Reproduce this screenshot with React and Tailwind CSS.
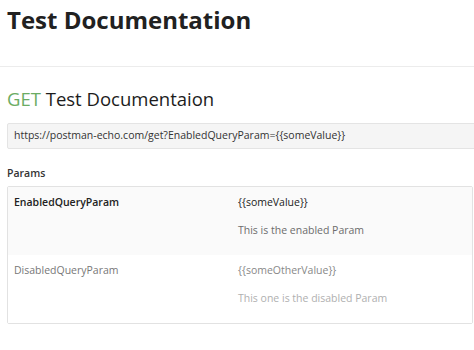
import React from "react";

const params = [
  {
    name: "EnabledQueryParam",
    value: "{{someValue}}",
    desc: "This is the enabled Param",
    enabled: true,
  },
  {
    name: "DisabledQueryParam",
    value: "{{someOtherValue}}",
    desc: "This one is the disabled Param",
    enabled: false,
  },
];

export default function App() {
  return (
    <div
      className="w-[474px] h-[350px] overflow-hidden bg-white text-[#282828]"
      style={{ fontFamily: '"Open Sans", "Noto Sans", sans-serif' }}
    >
      <div className="w-[520px]">
        {/* Page title */}
        <h1 className="pl-[7px] pt-[1px] h-[66px] text-[24px] leading-[38px] font-bold text-[#212121]">
          Test Documentation
        </h1>
        <div className="border-t border-[#ececec]" />

        <div className="pl-[7px]">
          <h2 className="mt-[18px] text-[18.5px] leading-[28px] text-[#1c1c1c]">
            <span className="text-[#6bac63]">GET</span> Test Documentaion
          </h2>

          {/* URL */}
          <div className="mt-[10px] h-[26px] flex items-center px-[6px] bg-[#f5f5f5] border border-[#e4e4e4] rounded-[2px] text-[10.5px] text-[#333]">
            https://postman-echo.com/get?EnabledQueryParam=&#123;&#123;someValue&#125;&#125;
          </div>

          <div className="mt-[16px] text-[10.5px] font-semibold text-[#333] leading-[16px]">
            Params
          </div>

          {/* Params table */}
          <div className="mt-[5px] border border-[#e2e2e2] rounded-[2px] w-[466px]">
            {params.map((p) => (
              <div
                key={p.name}
                className={`flex h-[68px] pt-[7px] ${
                  p.enabled ? "bg-[#fafafa]" : "bg-white"
                }`}
              >
                <div
                  className={`w-[230px] pl-[6px] text-[10.5px] leading-[16px] ${
                    p.enabled
                      ? "font-semibold text-[#222]"
                      : "text-[#777]"
                  }`}
                >
                  {p.name}
                </div>
                <div className="flex flex-col gap-[12px] text-[10.5px] leading-[16px]">
                  <div className={p.enabled ? "text-[#222]" : "text-[#888]"}>
                    {p.value}
                  </div>
                  <div className={p.enabled ? "text-[#6c6c6c]" : "text-[#b0b0b0]"}>
                    {p.desc}
                  </div>
                </div>
              </div>
            ))}
          </div>
        </div>
      </div>
    </div>
  );
}
